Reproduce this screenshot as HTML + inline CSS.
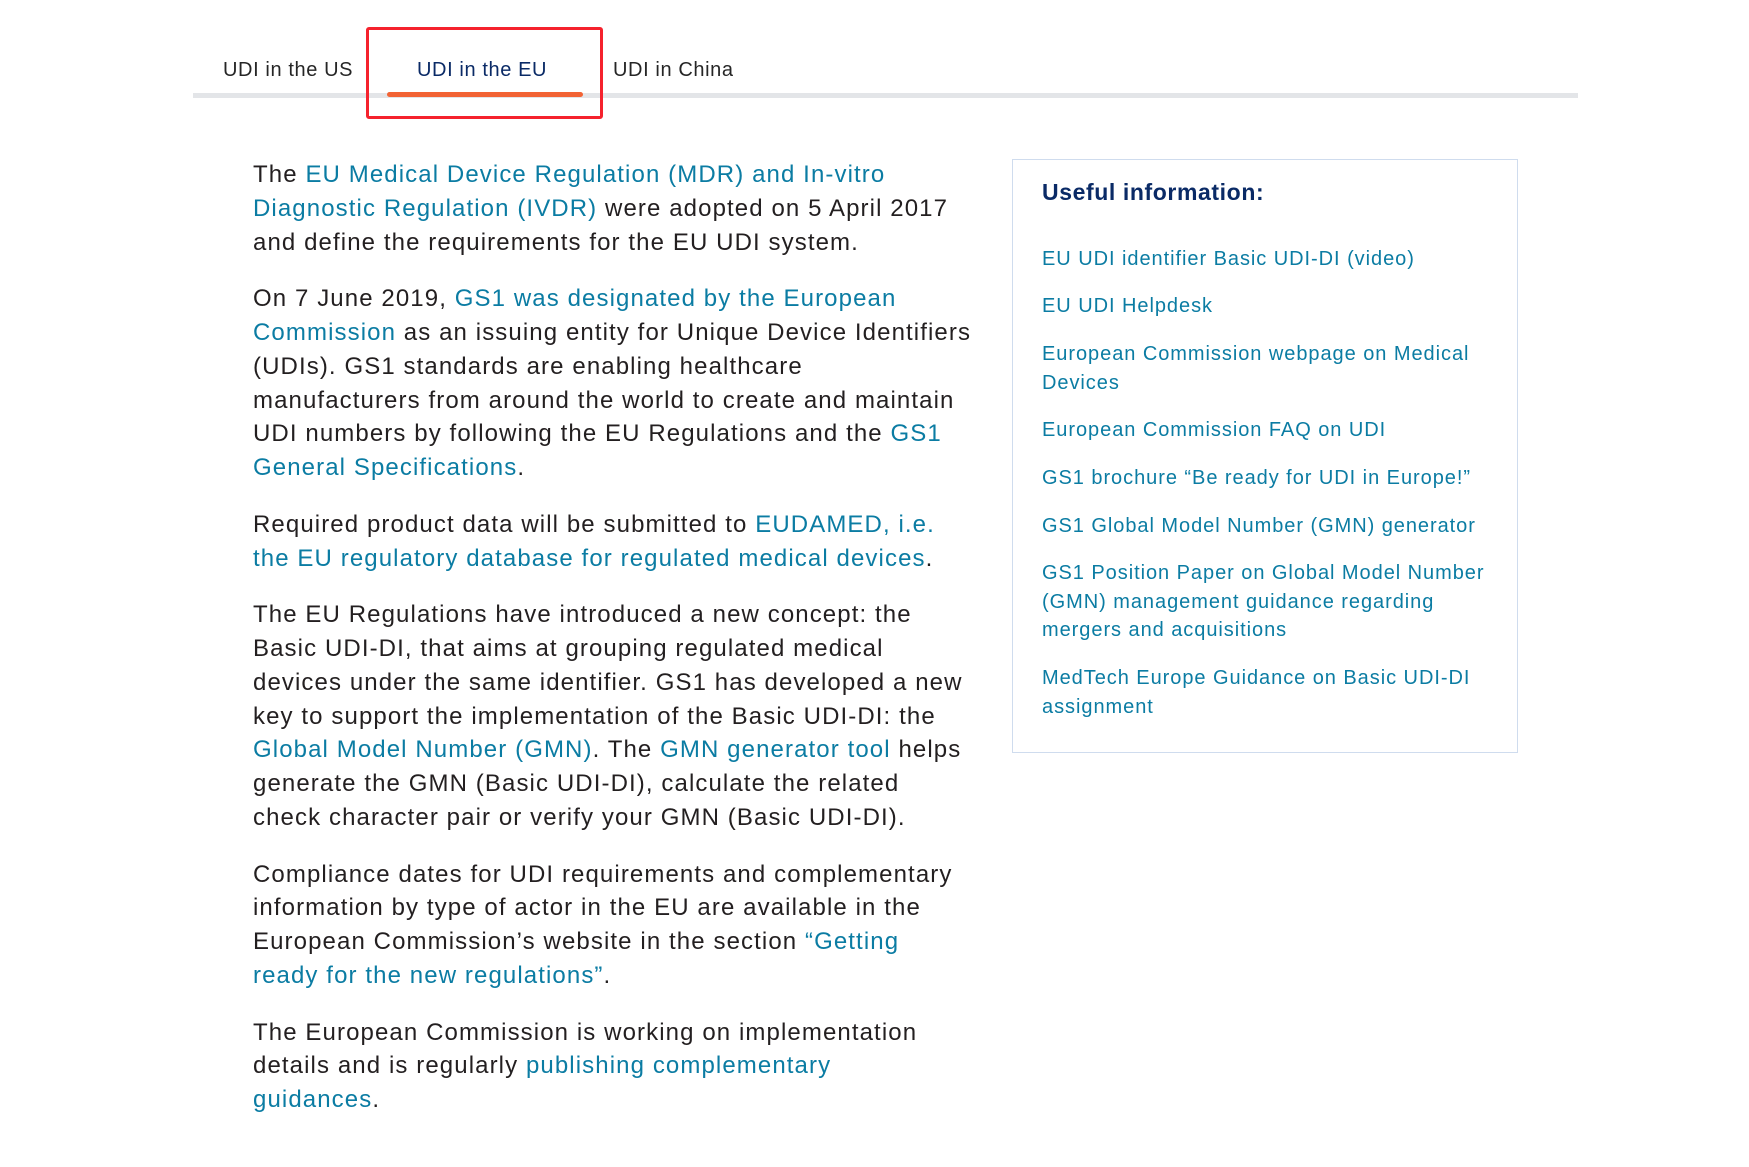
<!DOCTYPE html>
<html><head><meta charset="utf-8"><style>
html,body{margin:0;padding:0;background:#fff;width:1749px;height:1167px;overflow:hidden;position:relative;font-family:"Liberation Sans",sans-serif;color:#231f20}
.tab{position:absolute;top:59px;font-size:20px;letter-spacing:0.6px;color:#262626;white-space:nowrap}
a{color:#0b7ca3;text-decoration:none}
.main{position:absolute;left:253px;top:158px;font-size:24px;line-height:33.75px;letter-spacing:1.1px;white-space:nowrap}
.main p{margin:0 0 23px 0}
.side{position:absolute;left:1012px;top:159px;width:504px;height:592px;border:1px solid #cfdcee}
.side h3{position:absolute;left:29px;top:19px;margin:0;font-size:23px;font-weight:bold;color:#0a2a66;letter-spacing:0.6px;white-space:nowrap}
.it{position:absolute;left:29px;font-size:20px;line-height:28.6px;letter-spacing:0.95px;white-space:nowrap;color:#0b7ca3}
</style></head><body>
<div class="tab" style="left:223px">UDI in the US</div>
<div class="tab" style="left:417px;color:#0a2a66">UDI in the EU</div>
<div class="tab" style="left:613px">UDI in China</div>
<div style="position:absolute;left:193px;top:93px;width:1385px;height:5px;background:#e3e5e8"></div>
<div style="position:absolute;left:387px;top:92px;width:196px;height:5px;border-radius:3px;background:#f26334"></div>
<div style="position:absolute;left:366px;top:27px;width:231px;height:86px;border:3px solid #f5222d;border-radius:3px"></div>

<div class="main">
<p>The <a>EU Medical Device Regulation (MDR) and In-vitro<br>Diagnostic Regulation (IVDR)</a> were adopted on 5 April 2017<br>and define the requirements for the EU UDI system.</p>
<p>On 7 June 2019, <a>GS1 was designated by the European<br>Commission</a> as an issuing entity for Unique Device Identifiers<br>(UDIs). GS1 standards are enabling healthcare<br>manufacturers from around the world to create and maintain<br>UDI numbers by following the EU Regulations and the <a>GS1<br>General Specifications</a>.</p>
<p>Required product data will be submitted to <a>EUDAMED, i.e.<br>the EU regulatory database for regulated medical devices</a>.</p>
<p>The EU Regulations have introduced a new concept: the<br>Basic UDI-DI, that aims at grouping regulated medical<br>devices under the same identifier. GS1 has developed a new<br>key to support the implementation of the Basic UDI-DI: the<br><a>Global Model Number (GMN)</a>. The <a>GMN generator tool</a> helps<br>generate the GMN (Basic UDI-DI), calculate the related<br>check character pair or verify your GMN (Basic UDI-DI).</p>
<p>Compliance dates for UDI requirements and complementary<br>information by type of actor in the EU are available in the<br>European Commission’s website in the section <a>“Getting<br>ready for the new regulations”</a>.</p>
<p>The European Commission is working on implementation<br>details and is regularly <a>publishing complementary<br>guidances</a>.</p>
</div>

<div class="side">
<h3>Useful information:</h3>
<div class="it" style="top:85px">EU UDI identifier Basic UDI-DI (video)</div>
<div class="it" style="top:132px">EU UDI Helpdesk</div>
<div class="it" style="top:180px">European Commission webpage on Medical<br>Devices</div>
<div class="it" style="top:256px">European Commission FAQ on UDI</div>
<div class="it" style="top:304px">GS1 brochure “Be ready for UDI in Europe!”</div>
<div class="it" style="top:352px">GS1 Global Model Number (GMN) generator</div>
<div class="it" style="top:399px">GS1 Position Paper on Global Model Number<br>(GMN) management guidance regarding<br>mergers and acquisitions</div>
<div class="it" style="top:504px">MedTech Europe Guidance on Basic UDI-DI<br>assignment</div>
</div>
</body></html>
